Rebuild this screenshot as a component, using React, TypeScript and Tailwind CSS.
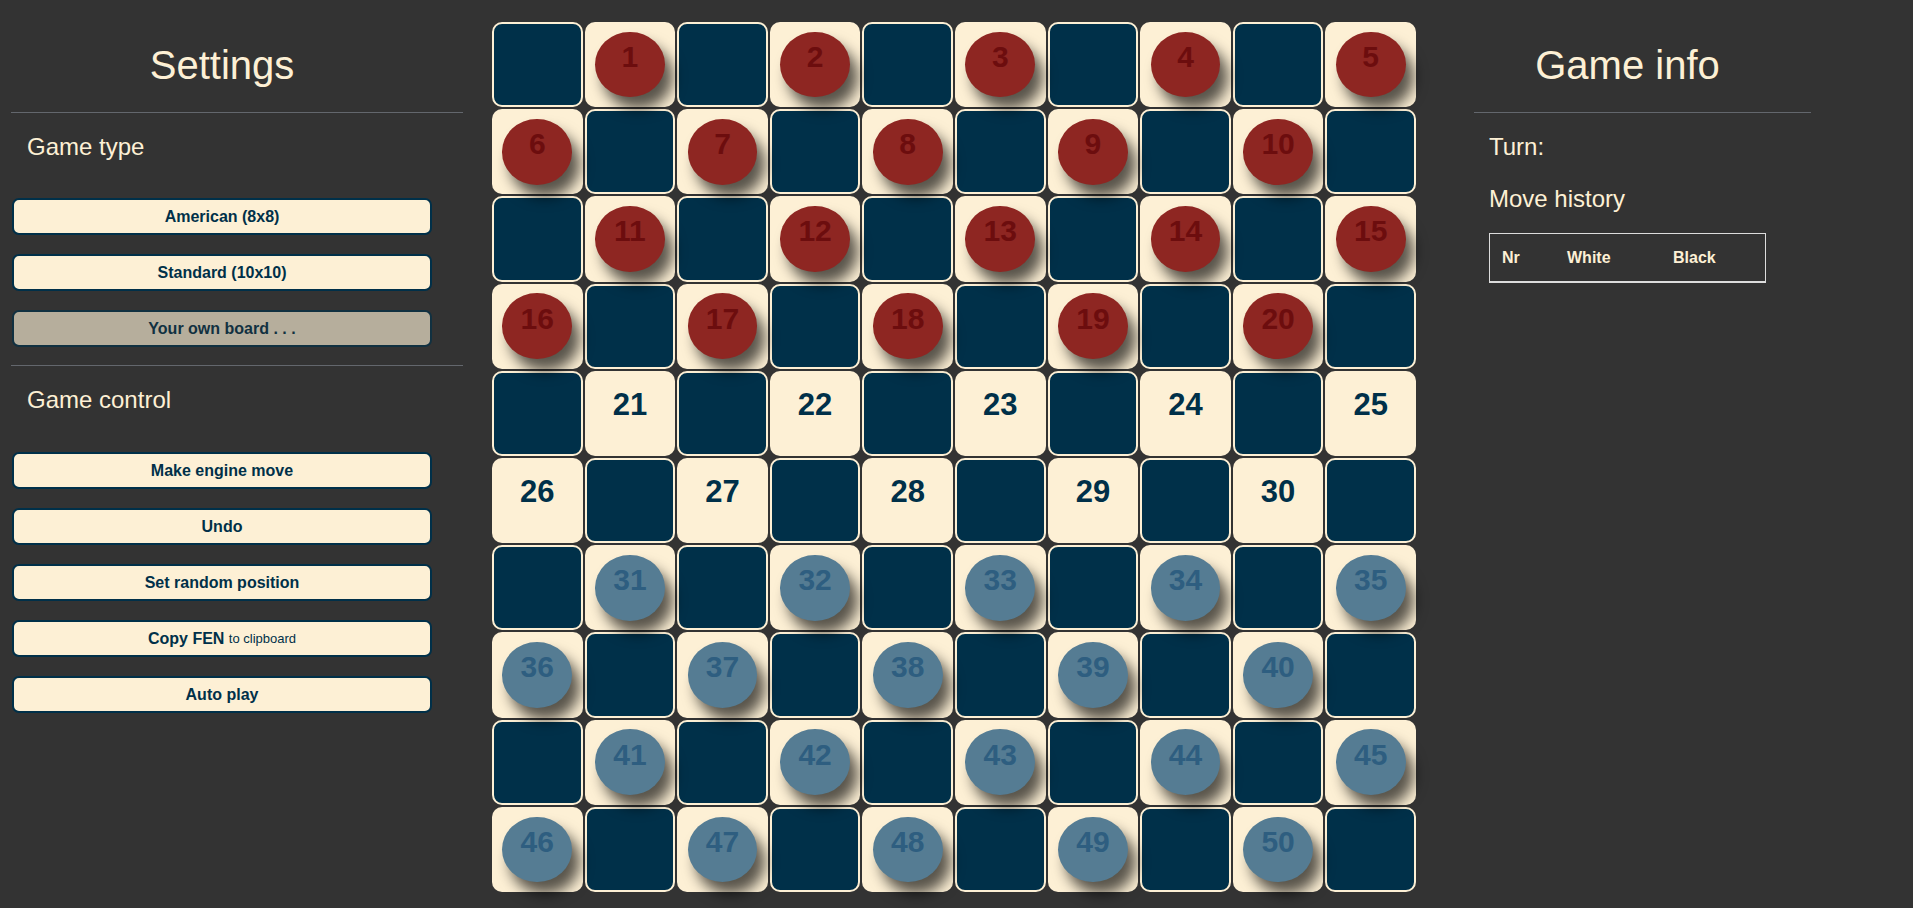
import type { ReactNode } from "react";

const SIZE = 10;

type Cell = { key: string; playable: boolean; num: number; piece: "red" | "blue" | null };

function buildBoard(): Cell[] {
  const cells: Cell[] = [];
  for (let r = 0; r < SIZE; r++) {
    for (let c = 0; c < SIZE; c++) {
      const playable = (r + c) % 2 === 1;
      const num = r * 5 + Math.floor(c / 2) + 1;
      let piece: Cell["piece"] = null;
      if (playable && r < 4) piece = "red";
      if (playable && r > 5) piece = "blue";
      cells.push({ key: `${r}-${c}`, playable, num, piece });
    }
  }
  return cells;
}

function PanelButton({ children, disabled }: { children: ReactNode; disabled?: boolean }) {
  return (
    <button
      type="button"
      disabled={disabled}
      className={`ml-px flex h-[37px] w-[420px] items-center justify-center rounded-[7px] border-2 border-[#003049] bg-[#fdf0d5] text-[16px] font-bold text-[#003049] ${
        disabled ? "opacity-65" : ""
      }`}
    >
      {children}
    </button>
  );
}

function SubHeading({ children }: { children: ReactNode }) {
  return <h3 className="pl-4 text-[24px] leading-[28px] text-[#fdf0d5]">{children}</h3>;
}

function Square({ cell }: { cell: Cell }) {
  if (!cell.playable) {
    return <div className="rounded-[10px] border-2 border-[#fdf0d5] bg-[#003049]" />;
  }
  return (
    <div className="flex items-center justify-center rounded-[10px] bg-[#fdf0d5]">
      {cell.piece ? (
        <div
          className={`relative flex h-[77%] w-[77%] items-center justify-center rounded-[50%] pb-[16px] text-[30px] font-bold shadow-[8px_12px_14px_rgba(0,0,0,0.65)] ${
            cell.piece === "red" ? "bg-[#8e2622] text-[#6c0d0e]" : "bg-[#557c93] text-[#2e5e80]"
          }`}
        >
          {cell.num}
        </div>
      ) : (
        <span className="pb-[17px] text-[31px] font-bold text-[#003049]">{cell.num}</span>
      )}
    </div>
  );
}

export default function App() {
  const cells = buildBoard();

  return (
    <div className="flex h-[908px] overflow-hidden bg-[#333333] font-['Liberation_Sans',Arial,sans-serif]">
      <aside className="w-[492px] shrink-0 pl-[11px]">
        <h1 className="ml-px mt-[42px] w-[420px] text-center text-[40px] leading-[46px] text-[#fdf0d5]">Settings</h1>
        <hr className="mt-[24px] w-[452px] border-t border-[#63676d]" />
        <div className="mt-[20px]">
          <SubHeading>Game type</SubHeading>
          <div className="mt-[37px] flex flex-col gap-[19px]">
            <PanelButton>American (8x8)</PanelButton>
            <PanelButton>Standard (10x10)</PanelButton>
            <PanelButton disabled>Your own board . . .</PanelButton>
          </div>
        </div>
        <hr className="mt-[18px] w-[452px] border-t border-[#63676d]" />
        <div className="mt-[20px]">
          <SubHeading>Game control</SubHeading>
          <div className="mt-[38px] flex flex-col gap-[19px]">
            <PanelButton>Make engine move</PanelButton>
            <PanelButton>Undo</PanelButton>
            <PanelButton>Set random position</PanelButton>
            <PanelButton>
              Copy FEN&nbsp;<span className="text-[13px] font-normal">to clipboard</span>
            </PanelButton>
            <PanelButton>Auto play</PanelButton>
          </div>
        </div>
      </aside>

      <main className="shrink-0 pt-[22px]">
        <div className="grid h-[870px] w-[924px] grid-cols-10 grid-rows-10 gap-[2px]">
          {cells.map((cell) => (
            <Square key={cell.key} cell={cell} />
          ))}
        </div>
      </main>

      <aside className="ml-[58px] w-[337px] shrink-0">
        <h1 className="ml-[15px] mt-[42px] w-[277px] text-center text-[40px] leading-[46px] text-[#fdf0d5]">Game info</h1>
        <hr className="mt-[24px] w-[337px] border-t border-[#63676d]" />
        <div className="mt-[20px] pl-[15px] text-[#fdf0d5]">
          <p className="text-[24px] leading-[28px]">Turn:</p>
          <p className="mt-[24px] text-[24px] leading-[28px]">Move history</p>
          <div className="mt-[20px] flex h-[50px] w-[277px] items-center border border-b-2 border-[#dddddd] pl-[12px] text-[16px] font-bold">
            <span className="w-[65px]">Nr</span>
            <span className="w-[106px]">White</span>
            <span>Black</span>
          </div>
        </div>
      </aside>
    </div>
  );
}
